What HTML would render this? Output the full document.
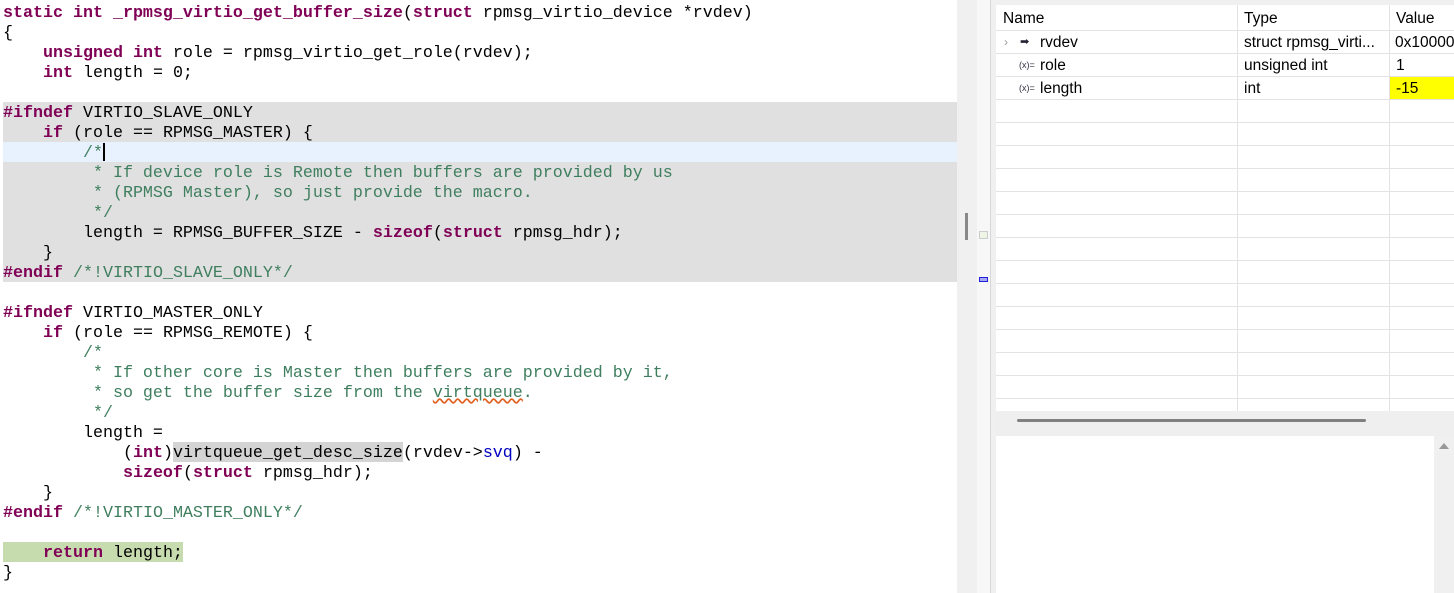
<!DOCTYPE html>
<html><head><meta charset="utf-8"><style>
*{margin:0;padding:0;box-sizing:border-box}
body{width:1454px;height:593px;overflow:hidden;background:#fff;position:relative}
#ed{position:absolute;left:0;top:0;width:957px;height:593px;background:#fff}
.l{position:absolute;left:3px;height:20px;line-height:20px;padding-top:2px;font-family:"Liberation Mono",monospace;font-size:16.67px;white-space:pre;color:#000}
.k{color:#7f0055;font-weight:bold}
.c{color:#3f7f5f}
.b{color:#0000c0}
.band{position:absolute;left:3px;width:954px}
.pt{position:absolute;font-family:"Liberation Sans",sans-serif;font-size:15.5px;color:#000;line-height:23px;padding-top:1px;white-space:nowrap}
.hl{position:absolute;left:996px;width:458px;height:1px;background:#e3e3e3}
</style></head><body>
<div id="ed">
<div class="band" style="top:102px;height:180px;background:#e0e0e0"></div>
<div class="band" style="top:142px;height:20px;background:#e8f2fe"></div>
<div class="band" style="top:542px;height:20px;width:180px;background:#c7dcae"></div>
<div style="position:absolute;left:173px;top:442px;width:230px;height:20px;background:#d4d4d4"></div>
<div style="position:absolute;left:103px;top:143px;width:1.5px;height:18px;background:#000"></div>

<div class="l" style="top:2px"><span class="k">static int _rpmsg_virtio_get_buffer_size</span>(<span class="k">struct</span> rpmsg_virtio_device *rvdev)</div>
<div class="l" style="top:22px">{</div>
<div class="l" style="top:42px">    <span class="k">unsigned int</span> role = rpmsg_virtio_get_role(rvdev);</div>
<div class="l" style="top:62px">    <span class="k">int</span> length = 0;</div>
<div class="l" style="top:102px"><span class="k">#ifndef</span> VIRTIO_SLAVE_ONLY</div>
<div class="l" style="top:122px">    <span class="k">if</span> (role == RPMSG_MASTER) {</div>
<div class="l c" style="top:142px">        /*</div>
<div class="l c" style="top:162px">         * If device role is Remote then buffers are provided by us</div>
<div class="l c" style="top:182px">         * (RPMSG Master), so just provide the macro.</div>
<div class="l c" style="top:202px">         */</div>
<div class="l" style="top:222px">        length = RPMSG_BUFFER_SIZE - <span class="k">sizeof</span>(<span class="k">struct</span> rpmsg_hdr);</div>
<div class="l" style="top:242px">    }</div>
<div class="l" style="top:262px"><span class="k">#endif</span> <span class="c">/*!VIRTIO_SLAVE_ONLY*/</span></div>
<div class="l" style="top:302px"><span class="k">#ifndef</span> VIRTIO_MASTER_ONLY</div>
<div class="l" style="top:322px">    <span class="k">if</span> (role == RPMSG_REMOTE) {</div>
<div class="l c" style="top:342px">        /*</div>
<div class="l c" style="top:362px">         * If other core is Master then buffers are provided by it,</div>
<div class="l c" style="top:382px">         * so get the buffer size from the <span style="text-decoration:underline wavy #e06020">virtqueue</span>.</div>
<div class="l c" style="top:402px">         */</div>
<div class="l" style="top:422px">        length =</div>
<div class="l" style="top:442px">            (<span class="k">int</span>)virtqueue_get_desc_size(rvdev-&gt;<span class="b">svq</span>) -</div>
<div class="l" style="top:462px">            <span class="k">sizeof</span>(<span class="k">struct</span> rpmsg_hdr);</div>
<div class="l" style="top:482px">    }</div>
<div class="l" style="top:502px"><span class="k">#endif</span> <span class="c">/*!VIRTIO_MASTER_ONLY*/</span></div>
<div class="l" style="top:542px">    <span class="k">return</span> length;</div>
<div class="l" style="top:562px">}</div>
</div>

<div style="position:absolute;left:957px;top:0;width:20px;height:593px;background:#f0f0f0"></div>
<div style="position:absolute;left:965px;top:213px;width:3px;height:27px;background:#888"></div>
<div style="position:absolute;left:977px;top:0;width:13px;height:593px;background:#f7f7f7"></div>
<div style="position:absolute;left:979px;top:231px;width:9px;height:8px;border:1px solid #ccc;background:#eef5e6"></div>
<div style="position:absolute;left:979px;top:277px;width:9px;height:5px;border:1px solid #2020e0;background:#a8a8f0"></div>
<div style="position:absolute;left:990px;top:0;width:1px;height:593px;background:#d8d8d8"></div>
<div style="position:absolute;left:991px;top:0;width:5px;height:593px;background:#f0f0f0"></div>
<div style="position:absolute;left:996px;top:0;width:458px;height:5px;background:#f0f0f0"></div>

<div style="position:absolute;left:1237px;top:5px;width:1px;height:406px;background:#e3e3e3"></div>
<div style="position:absolute;left:1389px;top:5px;width:1px;height:406px;background:#e3e3e3"></div>
<div class="hl" style="top:30px"></div><div class="hl" style="top:53px"></div><div class="hl" style="top:76px"></div><div class="hl" style="top:99px"></div><div class="hl" style="top:122px"></div><div class="hl" style="top:145px"></div><div class="hl" style="top:168px"></div><div class="hl" style="top:191px"></div><div class="hl" style="top:214px"></div><div class="hl" style="top:237px"></div><div class="hl" style="top:260px"></div><div class="hl" style="top:283px"></div><div class="hl" style="top:306px"></div><div class="hl" style="top:329px"></div><div class="hl" style="top:352px"></div><div class="hl" style="top:375px"></div><div class="hl" style="top:398px"></div>

<div class="pt" style="left:1003px;top:6px">Name</div>
<div class="pt" style="left:1244px;top:6px">Type</div>
<div class="pt" style="left:1396px;top:6px">Value</div>
<div class="pt" style="left:1004px;top:30px;color:#999;font-size:12px">›</div>
<div class="pt" style="left:1020px;top:30px;font-size:11px;color:#223">➡</div>
<div class="pt" style="left:1040px;top:30px">rvdev</div>
<div class="pt" style="left:1244px;top:30px">struct rpmsg_virti...</div>
<div class="pt" style="left:1395px;top:30px">0x10000</div>
<div class="pt" style="left:1019px;top:53px;font-size:9px;color:#334">(x)=</div>
<div class="pt" style="left:1040px;top:53px">role</div>
<div class="pt" style="left:1244px;top:53px">unsigned int</div>
<div class="pt" style="left:1396px;top:53px">1</div>
<div style="position:absolute;left:1390px;top:77px;width:64px;height:22px;background:#ffff00"></div>
<div class="pt" style="left:1019px;top:76px;font-size:9px;color:#334">(x)=</div>
<div class="pt" style="left:1040px;top:76px">length</div>
<div class="pt" style="left:1244px;top:76px">int</div>
<div class="pt" style="left:1396px;top:76px">-15</div>

<div style="position:absolute;left:996px;top:411px;width:458px;height:25px;background:#efefef"></div>
<div style="position:absolute;left:1017px;top:419px;width:349px;height:3px;border-radius:2px;background:#808080"></div>
<div style="position:absolute;left:1434px;top:436px;width:20px;height:157px;background:#f0f0f0"></div>
<div style="position:absolute;left:1439px;top:443px;width:0;height:0;border-left:5px solid transparent;border-right:5px solid transparent;border-bottom:6px solid #999"></div>
</body></html>
